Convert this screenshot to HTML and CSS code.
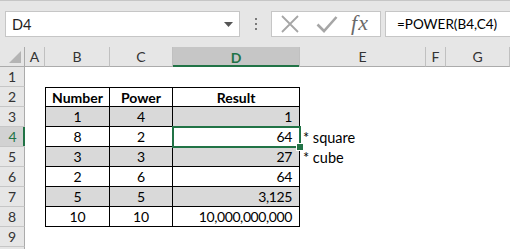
FILE: index.html
```html
<!DOCTYPE html>
<html>
<head>
<meta charset="utf-8">
<link rel="stylesheet" href="styles.css">
</head>
<body>
<div class="app">
  <div class="toolbar">
    <div class="namebox">
      <span class="name">D4</span>
      <svg class="drop" width="9" height="5" viewBox="0 0 9 5"><polygon points="0,0 9,0 4.5,5" fill="#555"/></svg>
    </div>
    <div class="grip"><i></i><i></i><i></i></div>
    <div class="fxbtns">
      <svg class="ico" width="20" height="18" viewBox="0 0 20 18"><path d="M2 1 L18 17 M18 1 L2 17" stroke="#a6a6a6" stroke-width="1.8" fill="none"/></svg>
      <svg class="ico" width="22" height="18" viewBox="0 0 22 18"><path d="M1.5 9.5 L8 16 L20.5 2" stroke="#a6a6a6" stroke-width="2.6" fill="none"/></svg>
      <span class="fx"><i>f</i><i>x</i></span>
    </div>
    <div class="formula">=POWER(B4,C4)</div>
  </div>
  <div class="sheet">
    <div class="corner"><span class="tri"></span></div>
    <div class="ch">A</div><div class="ch">B</div><div class="ch">C</div><div class="ch sel">D</div><div class="ch">E</div><div class="ch">F</div><div class="ch">G</div>

    <div class="rh">1</div><div></div><div></div><div></div><div></div><div></div><div></div><div></div>

    <div class="rh">2</div><div></div><div class="t top left b">Number</div><div class="t top b">Power</div><div class="t top b">Result</div><div></div><div></div><div></div>

    <div class="rh">3</div><div></div><div class="t left g">1</div><div class="t g">4</div><div class="t g num">1</div><div></div><div></div><div></div>

    <div class="rh sel">4</div><div></div><div class="t left">8</div><div class="t">2</div><div class="t num active">64</div><div class="note">* square</div><div></div><div></div>

    <div class="rh">5</div><div></div><div class="t left g">3</div><div class="t g">3</div><div class="t g num">27</div><div class="note">* cube</div><div></div><div></div>

    <div class="rh">6</div><div></div><div class="t left">2</div><div class="t">6</div><div class="t num">64</div><div></div><div></div><div></div>

    <div class="rh">7</div><div></div><div class="t left g">5</div><div class="t g">5</div><div class="t g num">3,125</div><div></div><div></div><div></div>

    <div class="rh">8</div><div></div><div class="t left">10</div><div class="t">10</div><div class="t num">10,000,000,000</div><div></div><div></div><div></div>

    <div class="rh">9</div><div></div><div></div><div></div><div></div><div></div><div></div><div></div>

    <div class="rh"></div><div></div><div></div><div></div><div></div><div></div><div></div><div></div>
  </div>
</div>
</body>
</html>
```

FILE: styles.css
```css
* { box-sizing: border-box; }
html, body { margin: 0; padding: 0; background: #fff; overflow: hidden; }
body { font-family: Lato, "Liberation Sans", sans-serif; font-size: 14px; color: #000; }
.app { width: 510px; height: 249px; overflow: hidden; }

.toolbar {
  height: 47px;
  background: #e6e6e6;
  border-top: 1px solid #c6c6c6;
  padding-top: 10px;
  display: flex;
  align-items: flex-start;
}
.namebox {
  margin-left: 5px;
  width: 235px;
  height: 26px;
  background: #fff;
  border: 1px solid #c6c6c6;
  display: flex;
  align-items: center;
  justify-content: space-between;
  padding: 0 6px 0 6px;
}
.name { font-size: 14.5px; color: #222; }
.drop { margin-top: 1px; }
.grip {
  width: 31px;
  height: 26px;
  display: flex;
  flex-direction: column;
  align-items: center;
  justify-content: center;
  gap: 3px;
}
.grip i { display: block; width: 2px; height: 2px; background: #7a7a7a; }
.fxbtns {
  width: 110px;
  height: 26px;
  background: #fff;
  border: 1px solid #c6c6c6;
  display: flex;
  align-items: center;
  padding-left: 8px;
  gap: 16px;
}
.fx {
  font-family: "Liberation Serif", serif;
  font-style: italic;
  font-size: 22px;
  color: #6a6a6a;
  line-height: 1;
  margin-left: -3px;
  margin-top: -2px;
}
.fx i { font-style: italic; }
.fx i + i { margin-left: 1px; }
.formula {
  margin-left: 4px;
  flex: 1;
  height: 26px;
  background: #fff;
  border: 1px solid #c6c6c6;
  border-right: none;
  padding-left: 11px;
  display: flex;
  align-items: center;
  font-size: 13.5px;
  color: #000;
}

.sheet {
  display: grid;
  grid-template-columns: 25px 20px 65px 63px 127px 126px 20px 64px;
  grid-template-rows: 20px repeat(10, 20px);
  background: #fff;
}
.corner {
  background: #e6e6e6;
  border-right: 1px solid #ababab;
  border-bottom: 1px solid #ababab;
  position: relative;
}
.tri {
  position: absolute;
  right: 3px;
  bottom: 3px;
  width: 0; height: 0;
  border-left: 12px solid transparent;
  border-bottom: 12px solid #b4b4b4;
}
.ch {
  background: #e6e6e6;
  border-right: 1px solid #c0c0c0;
  border-bottom: 1px solid #ababab;
  display: flex;
  align-items: center;
  justify-content: center;
  color: #333;
  font-size: 14px;
}
.ch.sel {
  background: #c6c6c6;
  color: #217346;
  font-weight: bold;
  border-bottom: none;
  box-shadow: inset 0 -2px 0 #217346;
}
.rh {
  background: #e6e6e6;
  border-right: 1px solid #ababab;
  border-bottom: 1px solid #c6c6c6;
  display: flex;
  align-items: center;
  justify-content: center;
  color: #333;
  font-size: 14px;
}
.rh.sel {
  background: #d2d2d2;
  color: #217346;
  border-right: none;
  box-shadow: inset -2px 0 0 #217346;
}
.t {
  border-right: 1px solid #000;
  border-bottom: 1px solid #000;
  display: flex;
  align-items: center;
  justify-content: center;
  line-height: 1;
  padding-top: 1px;
}
.t.top { border-top: 1px solid #000; }
.t.left { border-left: 1px solid #000; }
.t.b { font-weight: bold; }
.t.g { background: #d9d9d9; }
.t.num { justify-content: flex-end; padding-right: 7px; letter-spacing: -0.4px; }
.t.active {
  position: relative;
  z-index: 1;
  outline: 2px solid #217346;
  outline-offset: -1px;
}
.t.active::after {
  content: "";
  position: absolute;
  right: -4px;
  bottom: -4px;
  width: 6px;
  height: 6px;
  background: #217346;
  border: 1px solid #fff;
  box-sizing: content-box;
  margin: -1px;
}
.note {
  display: flex;
  align-items: center;
  padding-left: 3px;
  padding-top: 1px;
  white-space: nowrap;
  font-size: 14.5px;
}
```
